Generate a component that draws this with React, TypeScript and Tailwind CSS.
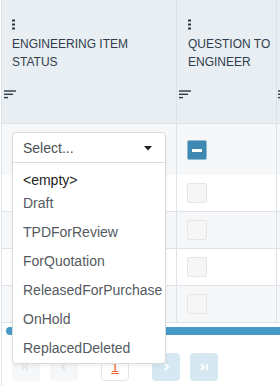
import React from "react";

const Kebab = () => (
  <svg width="4" height="12" viewBox="0 0 4 12" className="block">
    <rect x="0" y="1.5" width="3" height="2" fill="#2d3a47" />
    <rect x="0" y="5.5" width="3" height="2" fill="#2d3a47" />
    <rect x="0" y="9.5" width="3" height="2" fill="#2d3a47" />
  </svg>
);

const SortIcon = () => (
  <svg width="13" height="9" viewBox="0 0 13 9" className="block">
    <rect x="0" y="0.3" width="12" height="1.4" fill="#2d3a47" />
    <rect x="0" y="3.6" width="9" height="1.4" fill="#2d3a47" />
    <rect x="0" y="6.9" width="4" height="1.4" fill="#2d3a47" />
  </svg>
);

const Check = ({ on }: { on?: boolean }) =>
  on ? (
    <div className="w-[20px] h-[20px] rounded-[2px] bg-[#3f88b1] border border-[#8fb9d2] flex items-center justify-center">
      <div className="w-[10px] h-[3px] bg-white" />
    </div>
  ) : (
    <div className="w-[20px] h-[20px] rounded-[2px] bg-[#f6f6f6] border border-[#e6e6e6]" />
  );

const PageBtn = ({
  children,
  variant,
}: {
  children?: React.ReactNode;
  variant: "faint" | "blue" | "current";
}) => {
  const cls =
    variant === "faint"
      ? "bg-[#f5f7f9]"
      : variant === "blue"
      ? "bg-[#d6e9f3]"
      : "bg-white border border-[#e3e6e9]";
  return (
    <div
      className={`w-[28px] h-[28px] rounded-[4px] flex items-center justify-center ${cls}`}
    >
      {children}
    </div>
  );
};

export default function App() {
  const items = [
    "Draft",
    "TPDForReview",
    "ForQuotation",
    "ReleasedForPurchase",
    "OnHold",
    "ReplacedDeleted",
  ];
  const rows = [
    { bg: "bg-white" },
    { bg: "bg-[#f5f7f9]" },
    { bg: "bg-white" },
    { bg: "bg-[#f5f7f9]" },
  ];
  return (
    <div className="relative w-[280px] h-[386px] overflow-hidden bg-white font-['Liberation_Sans',Arial,sans-serif]">
      <div className="ml-px border-l border-[#dde3e8] h-[386px] flex flex-col">
        {/* Header */}
        <div className="flex h-[124px] bg-[#e9eef2] border-b border-[#dde3e8] shrink-0">
          <div className="w-[175px] border-r border-[#dde3e8] shrink-0 flex flex-col">
            <div className="pl-[10px] pt-[18px]">
              <Kebab />
            </div>
            <div className="pl-[10px] mt-[5px] text-[12px] leading-[18px] text-[#2f3d4c] uppercase">
              Engineering Item
              <br />
              Status
            </div>
            <div className="pl-[2px] mt-[19px]">
              <SortIcon />
            </div>
          </div>
          <div className="w-[100px] border-r border-[#dde3e8] shrink-0 flex flex-col">
            <div className="pl-[11px] pt-[18px]">
              <Kebab />
            </div>
            <div className="pl-[11px] mt-[5px] text-[12px] leading-[18px] text-[#2f3d4c] uppercase">
              Question to
              <br />
              Engineer
            </div>
            <div className="pl-[2px] mt-[19px]">
              <SortIcon />
            </div>
          </div>
          <div className="flex-1 flex flex-col">
            <div className="pl-[1px] mt-[90px]">
              <SortIcon />
            </div>
          </div>
        </div>

        {/* Row 1 */}
        <div className="flex h-[51px] bg-[#f5f7f9] shrink-0">
          <div className="w-[175px] border-r border-[#dde3e8] shrink-0" />
          <div className="w-[100px] border-r border-[#dde3e8] shrink-0 pl-[10px] pt-[16px]">
            <Check on />
          </div>
          <div className="flex-1" />
        </div>

        {rows.map((r, i) => (
          <div
            key={i}
            className={`flex h-[37px] border-b border-[#dde3e8] shrink-0 ${r.bg}`}
          >
            <div className="w-[175px] border-r border-[#dde3e8] shrink-0" />
            <div className="w-[100px] border-r border-[#dde3e8] shrink-0 pl-[10px] flex items-center">
              <Check />
            </div>
            <div className="flex-1" />
          </div>
        ))}

        {/* Scrollbar */}
        <div className="mt-[4px] pl-[4px] shrink-0">
          <div className="h-[8px] bg-[#4799c6] rounded-l-full w-[300px]" />
        </div>

        {/* Pagination */}
        <div className="mt-[18px] pl-[10px] flex items-center gap-[10px] shrink-0">
          <PageBtn variant="faint">
            <svg width="10" height="10" viewBox="0 0 10 10">
              <path d="M2 2v6M7 2L4 5l3 3" stroke="#e3e7eb" strokeWidth="1.5" fill="none" />
            </svg>
          </PageBtn>
          <PageBtn variant="faint">
            <svg width="10" height="10" viewBox="0 0 10 10">
              <path d="M6 2L3 5l3 3" stroke="#e3e7eb" strokeWidth="1.5" fill="none" />
            </svg>
          </PageBtn>
          <div className="mx-[13px]">
            <PageBtn variant="current">
              <span className="text-[14px] text-[#f2622c] underline decoration-[#f2622c]">1</span>
            </PageBtn>
          </div>
          <PageBtn variant="blue">
            <svg width="10" height="10" viewBox="0 0 10 10">
              <path d="M4 2l3 3-3 3" stroke="#ffffff" strokeWidth="1.8" fill="none" />
            </svg>
          </PageBtn>
          <PageBtn variant="blue">
            <svg width="12" height="10" viewBox="0 0 12 10">
              <path d="M3 2l3 3-3 3" stroke="#ffffff" strokeWidth="1.8" fill="none" />
              <path d="M9 2v6" stroke="#ffffff" strokeWidth="1.8" fill="none" />
            </svg>
          </PageBtn>
        </div>
      </div>

      {/* Dropdown overlay */}
      <div className="absolute left-[12px] top-[132px] w-[154px] bg-white border border-[#d9dcdf] rounded-[4px] shadow-[0_2px_4px_rgba(0,0,0,0.06)]">
        <div className="h-[30px] border-b border-[#d9dcdf] flex items-center justify-between pl-[10px] pr-[13px] pt-[2px]">
          <span className="text-[14px] text-[#4a4f55]">Select...</span>
          <svg width="8" height="5" viewBox="0 0 8 5">
            <path d="M0 0h8L4 4.5z" fill="#222" />
          </svg>
        </div>
        <div className="pt-[9px]">
          <div className="h-[17px] flex items-center pl-[10px] text-[14px] text-[#1e1e1e]">
            &lt;empty&gt;
          </div>
          {items.map((t) => (
            <div
              key={t}
              className="h-[29px] flex items-center pl-[10px] text-[14px] text-[#555a60] whitespace-nowrap"
            >
              {t}
            </div>
          ))}
        </div>
      </div>
    </div>
  );
}
